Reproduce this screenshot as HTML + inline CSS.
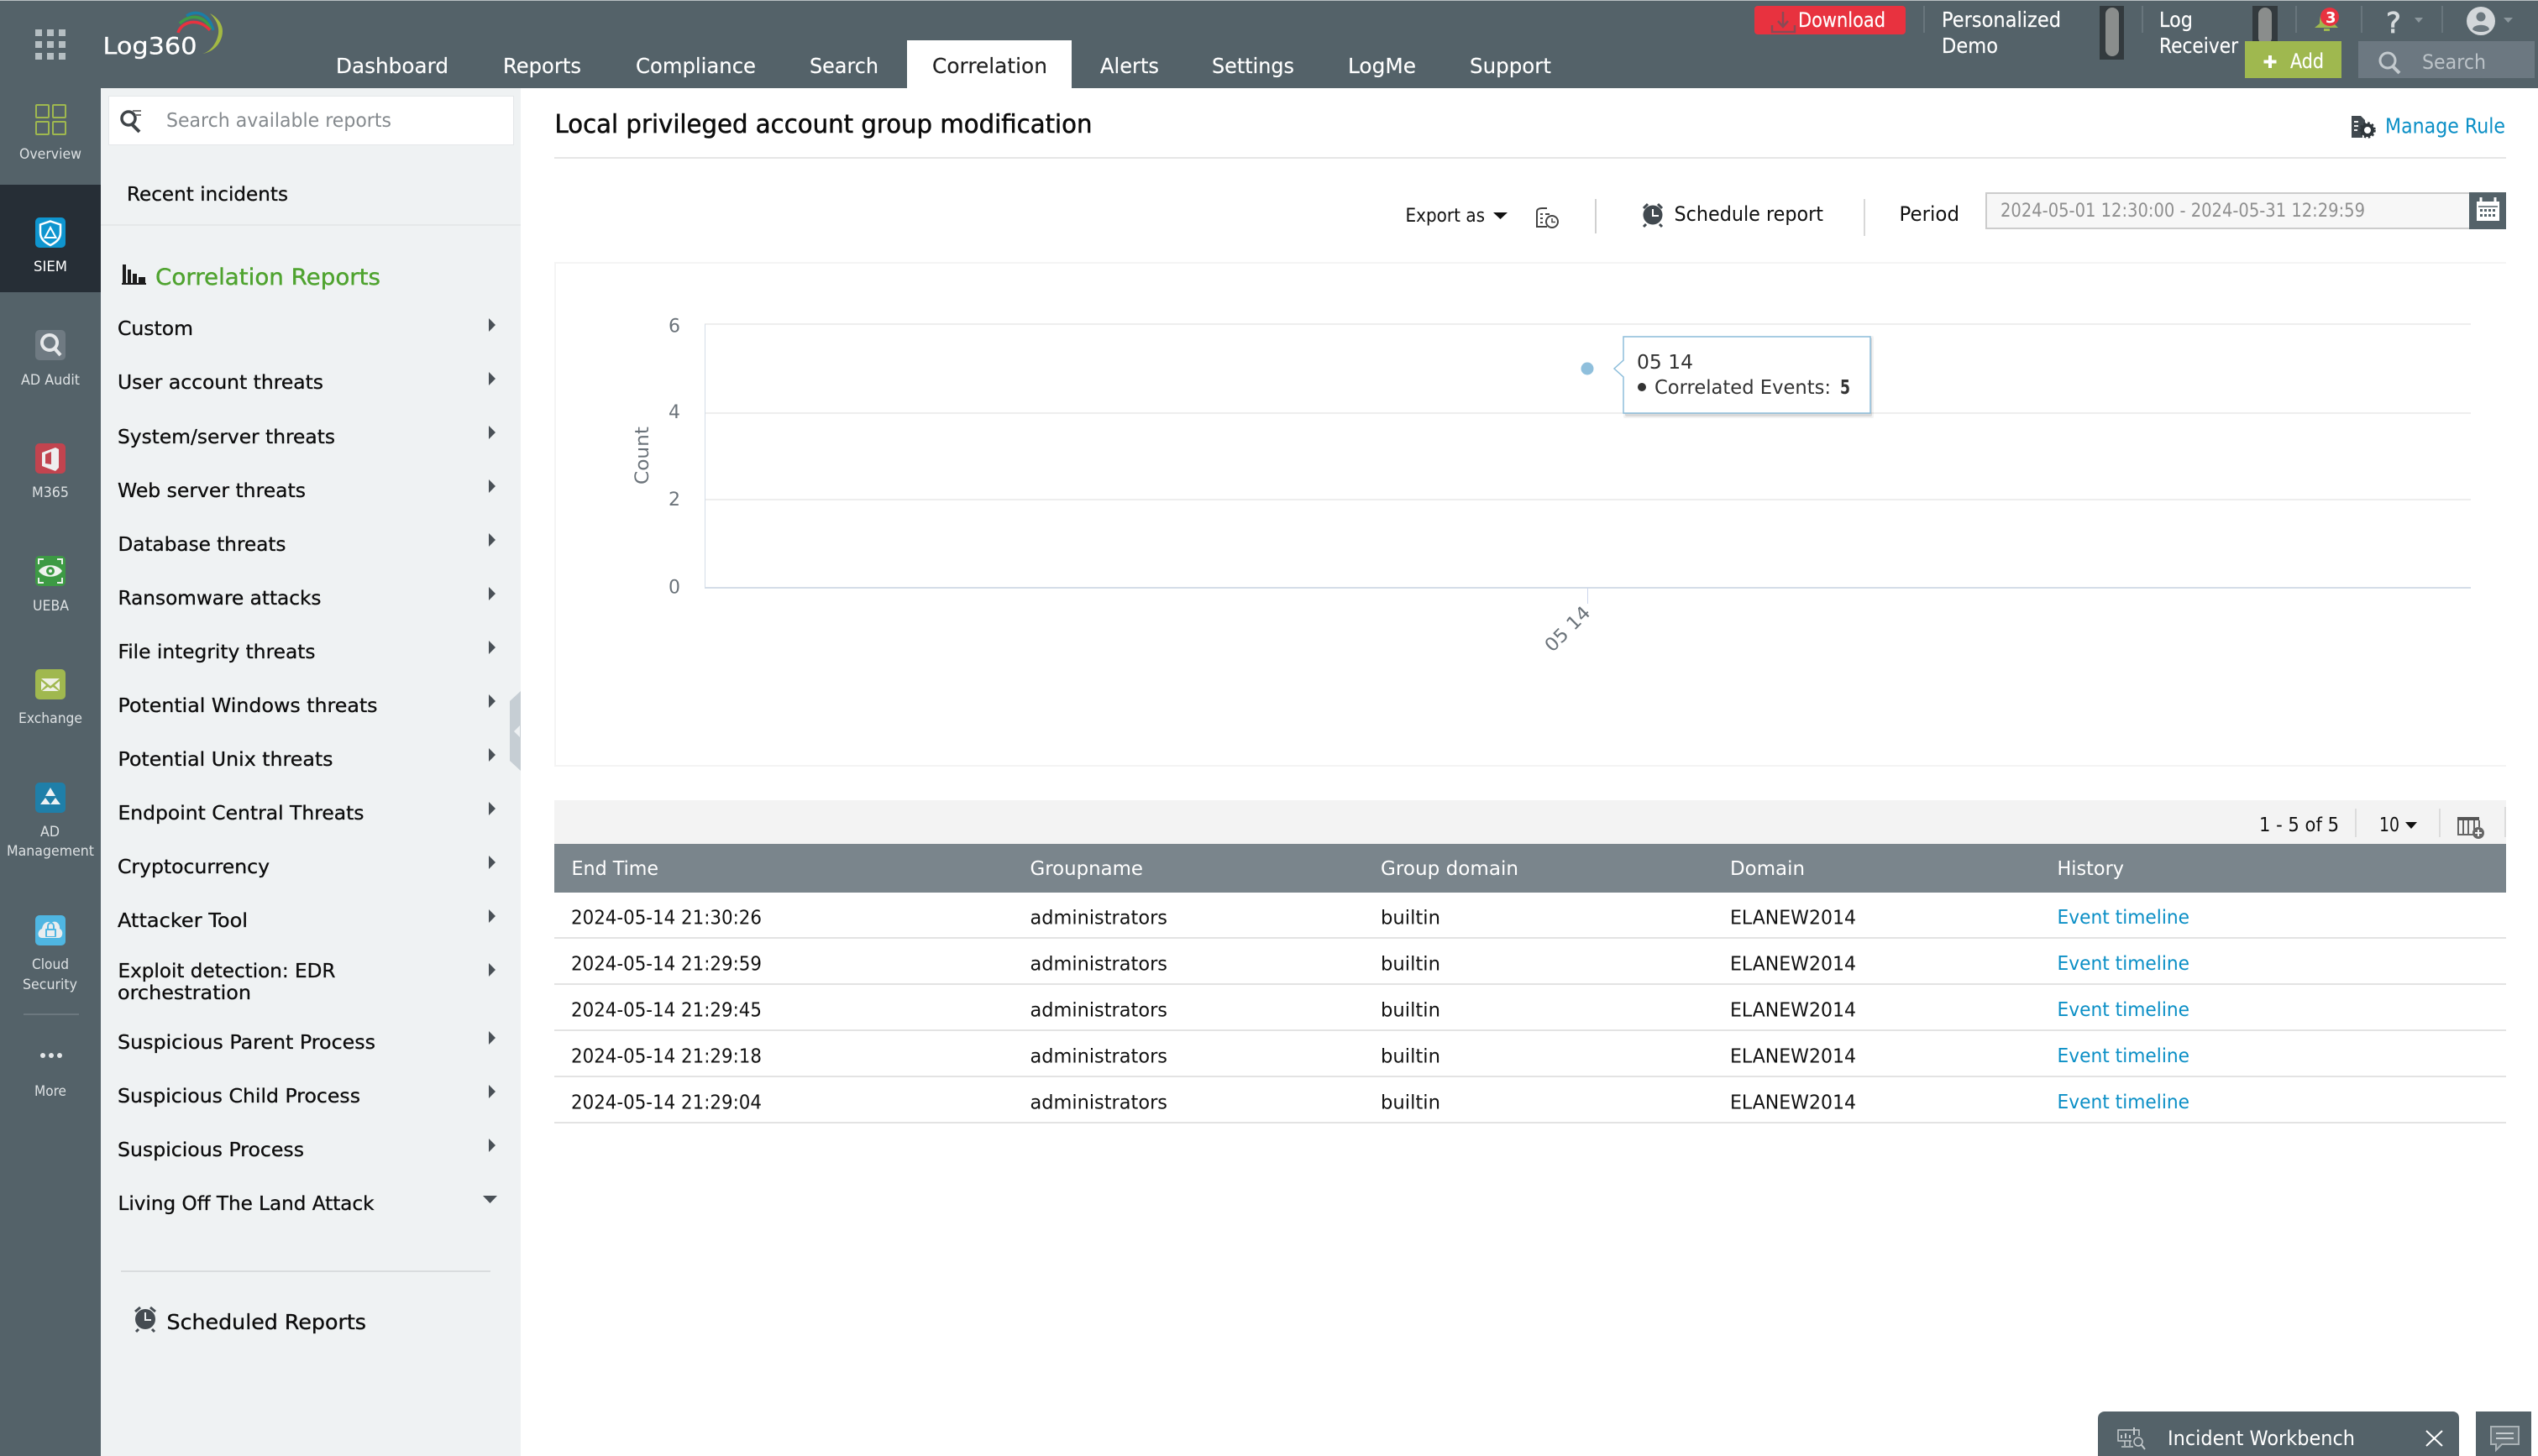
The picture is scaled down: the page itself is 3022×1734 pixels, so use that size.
<!DOCTYPE html>
<html lang="en"><head><meta charset="utf-8"><title>Log360</title>
<style>
html,body{margin:0;padding:0;background:#fff;width:3022px;height:1734px;overflow:hidden}
svg{display:block;position:absolute;left:0;top:0}
text{font-family:"DejaVu Sans","Liberation Sans",sans-serif;white-space:pre}
.m{font-size:23px;fill:#0c0c0c;stroke:#0c0c0c;stroke-width:.3px}
.n{font-size:25px;fill:#fff;stroke:#fff;stroke-width:.15px}
.r{font-size:17px;fill:#dde1e3}
.t{font-size:23px;fill:#111}
.h{font-size:23px;fill:#fff}
.l{font-size:23px;fill:#0b8fc6}
.a{font-size:22px;fill:#6b737a}
</style></head><body>
<svg xmlns="http://www.w3.org/2000/svg" width="3022" height="1734" viewBox="0 0 3022 1734">
<rect width="3022" height="1734" fill="#fff"/>
<!-- header and rail -->
<rect width="3022" height="105" fill="#546269"/>
<rect width="3022" height="1" fill="#b9bfc2"/>
<rect x="0" y="105" width="120" height="1629" fill="#546269"/>
<rect x="120" y="105" width="500" height="1629" fill="#eff2f3"/>
<!-- grid launcher -->
<g fill="#b5bec2"><rect x="42" y="35" width="8" height="8"/><rect x="56" y="35" width="8" height="8"/><rect x="70" y="35" width="8" height="8"/><rect x="42" y="49" width="8" height="8"/><rect x="56" y="49" width="8" height="8"/><rect x="70" y="49" width="8" height="8"/><rect x="42" y="63" width="8" height="8"/><rect x="56" y="63" width="8" height="8"/><rect x="70" y="63" width="8" height="8"/></g>
<!-- logo -->
<path d="M241 64C255 62 265 50 265 37C265 28 258 20 250 16C258 24 261 32 260 40C258 52 250 62 241 64Z" fill="#a3b943"/>
<path d="M222 19C232 12 248 14 254 36" fill="none" stroke="#1b7ea6" stroke-width="3.500"/>
<path d="M214 28C226 16 244 18 251 35" fill="none" stroke="#3f9a45" stroke-width="3.500"/>
<path d="M212 39C216 26 236 20 250 36" fill="none" stroke="#e8323f" stroke-width="3.500"/>
<text x="122.500" y="64" font-size="28" fill="#fff" stroke="#fff" stroke-width=".3" textLength="112" lengthAdjust="spacingAndGlyphs">Log360</text>
<!-- nav -->
<rect x="1080" y="48" width="196" height="58" fill="#fff"/>
<text class="n" x="400" y="87" textLength="134" lengthAdjust="spacingAndGlyphs">Dashboard</text>
<text class="n" x="599" y="87" textLength="93" lengthAdjust="spacingAndGlyphs">Reports</text>
<text class="n" x="757" y="87" textLength="143" lengthAdjust="spacingAndGlyphs">Compliance</text>
<text class="n" x="964" y="87" textLength="82" lengthAdjust="spacingAndGlyphs">Search</text>
<text class="n" x="1110" y="87" textLength="137" lengthAdjust="spacingAndGlyphs" style="fill:#222;stroke:#222">Correlation</text>
<text class="n" x="1310" y="87" textLength="70" lengthAdjust="spacingAndGlyphs">Alerts</text>
<text class="n" x="1443" y="87" textLength="98" lengthAdjust="spacingAndGlyphs">Settings</text>
<text class="n" x="1605" y="87" textLength="81" lengthAdjust="spacingAndGlyphs">LogMe</text>
<text class="n" x="1750" y="87" textLength="97" lengthAdjust="spacingAndGlyphs">Support</text>
<!-- header right -->
<rect x="2089" y="7" width="180" height="34" rx="4" fill="#e8323f"/>
<path d="M2123 14V30M2117 25L2123 32L2129 25" fill="none" stroke="#8a4a55" stroke-width="2.500"/><path d="M2110 30V38H2137V30" fill="none" stroke="#8a4a55" stroke-width="2.500"/>
<text class="n" x="2141" y="32" textLength="104" lengthAdjust="spacingAndGlyphs" style="font-size:24px">Download</text>
<g fill="#68757c"><rect x="2290" y="7" width="2" height="32"/><rect x="2550" y="7" width="2" height="32"/><rect x="2733" y="7" width="2" height="32"/><rect x="2811" y="7" width="2" height="32"/><rect x="2907" y="7" width="2" height="32"/></g>
<text class="n" x="2312" y="32" textLength="142" lengthAdjust="spacingAndGlyphs">Personalized</text>
<text class="n" x="2312" y="63" textLength="67" lengthAdjust="spacingAndGlyphs">Demo</text>
<rect x="2500" y="7" width="29" height="64" fill="#333a3e"/><rect x="2507" y="9" width="16" height="58" rx="8" fill="#8a8d8c"/>
<text class="n" x="2571" y="32" textLength="40" lengthAdjust="spacingAndGlyphs">Log</text>
<text class="n" x="2571" y="63" textLength="94" lengthAdjust="spacingAndGlyphs">Receiver</text>
<rect x="2682" y="7" width="30" height="44" fill="#333a3e"/><rect x="2689" y="9" width="16" height="44" rx="8" fill="#8a8d8c"/>
<rect x="2673" y="49" width="115" height="44" fill="#9fb84f"/>
<path d="M2703 66V81M2695.500 73.500H2710.500" stroke="#fff" stroke-width="4"/>
<text class="n" x="2727" y="81" textLength="40" lengthAdjust="spacingAndGlyphs" style="font-size:24px">Add</text>
<rect x="2808" y="49" width="210" height="44" fill="#6c7881"/>
<circle cx="2843" cy="72" r="9" fill="none" stroke="#c3cace" stroke-width="3"/><path d="M2849 79L2857 87" stroke="#c3cace" stroke-width="4"/>
<text class="n" x="2884" y="82" textLength="76" lengthAdjust="spacingAndGlyphs" style="font-size:24px;fill:#bcc3c8;stroke:none">Search</text>
<!-- bell -->
<path d="M2771 11C2763 12 2762 22 2762 28L2756 33H2784L2779 28C2779 22 2778 12 2771 11Z" fill="#9fb84f"/><rect x="2767" y="34" width="7" height="3" fill="#9fb84f"/>
<circle cx="2774" cy="20" r="11" fill="#e8323f"/><text x="2769" y="27" font-size="18" font-weight="700" fill="#fff">3</text>
<text x="2841" y="39" font-size="34" fill="#d5dadc" textLength="18" lengthAdjust="spacingAndGlyphs" stroke="#d5dadc" stroke-width=".8">?</text>
<path d="M2875 21H2885L2880 27Z" fill="#8d989e"/>
<circle cx="2954" cy="25" r="17" fill="#d3d7da"/><circle cx="2954" cy="20" r="5.500" fill="#6b777e"/><path d="M2944 35C2945 28 2963 28 2964 35C2960 39 2948 39 2944 35Z" fill="#6b777e"/>
<path d="M2981 21H2992L2986.500 27Z" fill="#8d989e"/>
<!-- rail -->
<rect x="0" y="220" width="120" height="128" fill="#262e36"/>
<g fill="none" stroke="#9fb84f" stroke-width="2"><rect x="43" y="125" width="15" height="15" rx="1"/><rect x="63" y="125" width="15" height="15" rx="1"/><rect x="43" y="145" width="15" height="15" rx="1"/><rect x="63" y="145" width="15" height="15" rx="1"/></g>
<text class="r" x="23" y="189" textLength="74" lengthAdjust="spacingAndGlyphs">Overview</text>
<rect x="42" y="259" width="36" height="36" rx="5" fill="#0f95cf"/>
<path d="M60 263.500L72 267.500V277C72 285 66 289 60 292C54 289 48 285 48 277V267.500Z" fill="none" stroke="#fff" stroke-width="2.500"/><path d="M60 271L66.500 283H53.500Z" fill="none" stroke="#fff" stroke-width="2"/>
<text class="r" x="40" y="323" textLength="40" lengthAdjust="spacingAndGlyphs" style="fill:#fff">SIEM</text>
<rect x="42" y="393" width="36" height="36" rx="5" fill="#6f7a82"/>
<circle cx="59" cy="408" r="9" fill="none" stroke="#e6e8ea" stroke-width="4"/><path d="M65 415L72 423" stroke="#e6e8ea" stroke-width="4"/>
<text class="r" x="25" y="458" textLength="70" lengthAdjust="spacingAndGlyphs">AD Audit</text>
<rect x="42" y="528" width="36" height="36" rx="5" fill="#c2444f"/>
<path d="M50 539L66 533L70 535V557L66 561L50 555ZM54 541V552L61 553V538Z" fill="#eee" fill-rule="evenodd"/>
<text class="r" x="38" y="592" textLength="44" lengthAdjust="spacingAndGlyphs">M365</text>
<rect x="42" y="662" width="36" height="36" rx="5" fill="#3d9a44"/>
<path d="M46 680C52 671 68 671 74 680C68 689 52 689 46 680Z" fill="#f0f3ef"/><circle cx="60" cy="680" r="5" fill="#3d9a44"/><circle cx="60" cy="680" r="2" fill="#f0f3ef"/>
<path d="M46 672V666H52M68 666H74V672M46 688V694H52M68 694H74V688" fill="none" stroke="#eaf0ea" stroke-width="2"/>
<text class="r" x="39" y="727" textLength="43" lengthAdjust="spacingAndGlyphs">UEBA</text>
<rect x="42" y="797" width="36" height="36" rx="5" fill="#a0b84f"/>
<path d="M49 808H71L60 817ZM49 811L55 816L49 822ZM71 811L65 816L71 822ZM50 823L57 818L60 820L63 818L70 823Z" fill="#eef0e4"/>
<text class="r" x="22" y="861" textLength="76" lengthAdjust="spacingAndGlyphs">Exchange</text>
<rect x="42" y="932" width="36" height="36" rx="5" fill="#1f7fa9"/>
<path d="M60 938L66 948H54ZM54 950L60 958H48ZM66 950L72 958H60Z" fill="#eef2f4"/>
<text class="r" x="48" y="996" textLength="23" lengthAdjust="spacingAndGlyphs">AD</text>
<text class="r" x="8" y="1019" textLength="104" lengthAdjust="spacingAndGlyphs">Management</text>
<rect x="42" y="1090" width="36" height="36" rx="5" fill="#4fb6e2"/>
<path d="M50 1117C44 1117 44 1108 50 1106C51 1099 57 1096 61 1099C66 1095 72 1100 71 1106C76 1108 75 1117 70 1117Z" fill="#e9edef"/>
<rect x="54" y="1106" width="13" height="10" rx="1" fill="#4fb6e2"/><path d="M57 1106V1103C57 1098 64 1098 64 1103V1106" fill="none" stroke="#4fb6e2" stroke-width="2"/><rect x="56" y="1108" width="9" height="7" fill="#e9edef"/>
<text class="r" x="38" y="1154" textLength="44" lengthAdjust="spacingAndGlyphs">Cloud</text>
<text class="r" x="27" y="1178" textLength="65" lengthAdjust="spacingAndGlyphs">Security</text>
<rect x="28" y="1207" width="66" height="2" fill="#6c787f"/>
<g fill="#e3e6e8"><circle cx="51" cy="1257" r="3"/><circle cx="61" cy="1257" r="3"/><circle cx="71" cy="1257" r="3"/></g>
<text class="r" x="41" y="1305" textLength="38" lengthAdjust="spacingAndGlyphs">More</text>
<!-- panel -->
<rect x="129.500" y="114.500" width="482" height="58" fill="#fff" stroke="#e4e7e9"/>
<circle cx="153" cy="141" r="8" fill="none" stroke="#3f4448" stroke-width="3.500"/><path d="M157 148L166 157" stroke="#3f4448" stroke-width="4"/><path d="M158 132H168M161 137H168" stroke="#777" stroke-width="2"/>
<text x="198" y="151" font-size="23" fill="#858a8e" textLength="268" lengthAdjust="spacingAndGlyphs">Search available reports</text>
<text class="m" x="151" y="239" textLength="192" lengthAdjust="spacingAndGlyphs">Recent incidents</text>
<rect x="120" y="267" width="500" height="2" fill="#e5e8e9"/>
<path d="M146 315H150V337H146ZM152 321H156V337H152ZM158 326H163V337H158ZM165 330H173V337H165ZM145 337H174V339H145Z" fill="#1c1c1c"/>
<text x="185" y="339" font-size="27" fill="#4fa32f" stroke="#4fa32f" stroke-width=".4" textLength="268" lengthAdjust="spacingAndGlyphs">Correlation Reports</text>
<text class="m" x="140" y="399" textLength="90" lengthAdjust="spacingAndGlyphs">Custom</text>
<text class="m" x="140" y="463" textLength="245" lengthAdjust="spacingAndGlyphs">User account threats</text>
<text class="m" x="140" y="528" textLength="259" lengthAdjust="spacingAndGlyphs">System/server threats</text>
<text class="m" x="140" y="592" textLength="224" lengthAdjust="spacingAndGlyphs">Web server threats</text>
<text class="m" x="140.500" y="656" textLength="200" lengthAdjust="spacingAndGlyphs">Database threats</text>
<text class="m" x="140.500" y="720" textLength="242" lengthAdjust="spacingAndGlyphs">Ransomware attacks</text>
<text class="m" x="140.500" y="784" textLength="235" lengthAdjust="spacingAndGlyphs">File integrity threats</text>
<text class="m" x="140.500" y="848" textLength="309" lengthAdjust="spacingAndGlyphs">Potential Windows threats</text>
<text class="m" x="140.500" y="912" textLength="256" lengthAdjust="spacingAndGlyphs">Potential Unix threats</text>
<text class="m" x="140.500" y="976" textLength="293" lengthAdjust="spacingAndGlyphs">Endpoint Central Threats</text>
<text class="m" x="140" y="1040" textLength="181" lengthAdjust="spacingAndGlyphs">Cryptocurrency</text>
<text class="m" x="140" y="1104" textLength="155" lengthAdjust="spacingAndGlyphs">Attacker Tool</text>
<text class="m" x="140.500" y="1164" textLength="259" lengthAdjust="spacingAndGlyphs">Exploit detection: EDR</text>
<text class="m" x="140" y="1190" textLength="159" lengthAdjust="spacingAndGlyphs">orchestration</text>
<text class="m" x="140" y="1249" textLength="307" lengthAdjust="spacingAndGlyphs">Suspicious Parent Process</text>
<text class="m" x="140" y="1313" textLength="289" lengthAdjust="spacingAndGlyphs">Suspicious Child Process</text>
<text class="m" x="140" y="1377" textLength="222" lengthAdjust="spacingAndGlyphs">Suspicious Process</text>
<text class="m" x="140.500" y="1441" textLength="305" lengthAdjust="spacingAndGlyphs">Living Off The Land Attack</text>
<g fill="#4a5157">
<path d="M582 379L590 387L582 395Z"/><path d="M582 443L590 451L582 459Z"/><path d="M582 507L590 515L582 523Z"/><path d="M582 571L590 579L582 587Z"/><path d="M582 635L590 643L582 651Z"/><path d="M582 699L590 707L582 715Z"/><path d="M582 763L590 771L582 779Z"/><path d="M582 827L590 835L582 843Z"/><path d="M582 891L590 899L582 907Z"/><path d="M582 955L590 963L582 971Z"/><path d="M582 1019L590 1027L582 1035Z"/><path d="M582 1083L590 1091L582 1099Z"/><path d="M582 1147L590 1155L582 1163Z"/><path d="M582 1228L590 1236L582 1244Z"/><path d="M582 1292L590 1300L582 1308Z"/><path d="M582 1356L590 1364L582 1372Z"/><path d="M575 1424H592L583.500 1433Z"/>
</g>
<path d="M620 823V918L607 906V835Z" fill="#c6ced4"/><path d="M619 864L612 871L619 878Z" fill="#eef1f3"/>
<rect x="144" y="1513" width="440" height="2" fill="#d9dcde"/>
<circle cx="173" cy="1571" r="12" fill="#454c52"/><path d="M161 1562L167 1557M185 1562L179 1557M165 1583L162 1586M181 1583L184 1586" stroke="#454c52" stroke-width="3"/><path d="M173 1563V1572H180" fill="none" stroke="#eef1f3" stroke-width="2"/>
<text x="198.500" y="1583" font-size="25" fill="#0c0c0c" stroke="#0c0c0c" stroke-width=".35" textLength="237.500" lengthAdjust="spacingAndGlyphs">Scheduled Reports</text>
<!-- main title -->
<text x="660.500" y="158" font-size="30" fill="#0c0c0c" stroke="#0c0c0c" stroke-width=".55" textLength="640" lengthAdjust="spacingAndGlyphs">Local privileged account group modification</text>
<path d="M2800 138H2811L2816 143V150H2813V164H2800Z" fill="#41494f"/><path d="M2803 145H2808M2803 150H2808M2803 155H2807" stroke="#eee" stroke-width="2"/>
<circle cx="2819" cy="155" r="6" fill="#fff" stroke="#2f363b" stroke-width="4"/><circle cx="2819" cy="155" r="8.500" fill="none" stroke="#2f363b" stroke-width="2.500" stroke-dasharray="2.500 2.500"/>
<text x="2840" y="158.500" font-size="25" fill="#0b8fc6" textLength="143" lengthAdjust="spacingAndGlyphs">Manage Rule</text>
<rect x="660" y="187" width="2324" height="2" fill="#e6e6e6"/>
<!-- toolbar -->
<text x="1673.500" y="264" font-size="22" fill="#111" textLength="94.500" lengthAdjust="spacingAndGlyphs">Export as</text>
<path d="M1778 253H1795L1786.500 261Z" fill="#111"/>
<path d="M1842 248H1836C1833 248 1830 249 1830 252V270H1842" fill="none" stroke="#444" stroke-width="2"/><path d="M1834 255H1837M1834 260H1837M1834 265H1837M1840 255H1845" stroke="#444" stroke-width="2"/>
<circle cx="1848" cy="264" r="7" fill="#fff" stroke="#444" stroke-width="2"/><path d="M1848 260V264.500H1852" fill="none" stroke="#444" stroke-width="1.500"/>
<rect x="1899" y="237" width="2" height="41" fill="#d0d0d0"/>
<circle cx="1968" cy="256" r="11.500" fill="#41494f"/><path d="M1957 248L1962 243M1979 248L1974 243M1960 267L1957 270M1976 267L1979 270" stroke="#41494f" stroke-width="3"/><path d="M1968 249V257H1975" fill="none" stroke="#fff" stroke-width="2"/>
<text x="1993.500" y="263" font-size="24" fill="#111" textLength="177.500" lengthAdjust="spacingAndGlyphs">Schedule report</text>
<rect x="2219" y="237" width="2" height="44" fill="#d8d8d8"/>
<text x="2261.500" y="263" font-size="24" fill="#111" textLength="71.500" lengthAdjust="spacingAndGlyphs">Period</text>
<rect x="2365" y="230" width="576" height="42" fill="#f7f7f7" stroke="#ccc" stroke-width="2"/>
<text x="2382" y="258" font-size="22" fill="#8f8f8f" textLength="434" lengthAdjust="spacingAndGlyphs">2024-05-01 12:30:00 - 2024-05-31 12:29:59</text>
<rect x="2940" y="229" width="44" height="44" fill="#546269"/>
<path d="M2949 240H2976V263H2949Z" fill="#fff"/><path d="M2954 235V243M2971 235V243" stroke="#fff" stroke-width="3"/><path d="M2951 246H2974" stroke="#546269" stroke-width="1.500"/>
<g fill="#546269"><rect x="2953" y="249" width="3" height="3"/><rect x="2958" y="249" width="3" height="3"/><rect x="2963" y="249" width="3" height="3"/><rect x="2968" y="249" width="3" height="3"/><rect x="2953" y="255" width="3" height="3"/><rect x="2958" y="255" width="3" height="3"/><rect x="2963" y="255" width="3" height="3"/><rect x="2968" y="255" width="3" height="3"/></g>
<!-- chart -->
<path d="M2984 313H661V912H2984" fill="none" stroke="#f4f4f4" stroke-width="2"/>
<g fill="#eeeeee"><rect x="839" y="385" width="2103" height="2"/><rect x="839" y="491" width="2103" height="2"/><rect x="839" y="594" width="2103" height="2"/></g>
<rect x="839" y="386" width="1" height="314" fill="#d4dde8"/>
<rect x="839" y="699" width="2103" height="2" fill="#d4dde8"/>
<rect x="1890" y="700" width="1" height="19" fill="#ccd6eb"/>
<text class="a" x="796" y="395.500">6</text><text class="a" x="796" y="498">4</text><text class="a" x="796" y="602">2</text><text class="a" x="796" y="706.500">0</text>
<text class="a" transform="translate(772 577) rotate(-90)" textLength="69" lengthAdjust="spacingAndGlyphs">Count</text>
<circle cx="1890" cy="439" r="7.500" fill="#8fbfdc"/>
<text class="a" transform="translate(1895 731) rotate(-45)" text-anchor="end" textLength="66" lengthAdjust="spacingAndGlyphs" x="0" y="0">05 14</text>
<rect x="1933" y="400" width="298" height="98" fill="#000" opacity=".05" rx="2"/>
<rect x="1935" y="402" width="294" height="94" fill="#000" opacity=".10" rx="2"/>
<path d="M1933 401H2227V492H1933V449L1922 439L1933 429Z" fill="#fff" stroke="#8dbedb" stroke-width="1.500"/>
<text x="1949" y="439" font-size="23" fill="#333" textLength="67" lengthAdjust="spacingAndGlyphs">05 14</text>
<circle cx="1955" cy="461" r="5" fill="#333"/>
<text x="1970" y="469" font-size="23" fill="#333" textLength="210" lengthAdjust="spacingAndGlyphs">Correlated Events:</text>
<text x="2191" y="469" font-size="23" font-weight="700" fill="#333" textLength="12" lengthAdjust="spacingAndGlyphs">5</text>
<!-- table -->
<rect x="660" y="953" width="2324" height="52" fill="#f3f3f3"/>
<text x="2690" y="990" font-size="23" fill="#111" textLength="95" lengthAdjust="spacingAndGlyphs">1 - 5 of 5</text>
<rect x="2804" y="963" width="2" height="34" fill="#dcdcdc"/>
<text x="2833" y="990" font-size="23" fill="#111" textLength="24" lengthAdjust="spacingAndGlyphs">10</text>
<path d="M2864 979H2878L2871 987Z" fill="#111"/>
<rect x="2904" y="963" width="2" height="34" fill="#dcdcdc"/>
<rect x="2982" y="961" width="2" height="36" fill="#dcdcdc"/>
<path d="M2926 973H2952V977H2926Z" fill="#555"/><path d="M2927 977V994H2946M2933 977V994M2939 977V994M2946 977V988M2952 977V985" fill="none" stroke="#666" stroke-width="2"/>
<circle cx="2951" cy="992" r="7" fill="#666"/><path d="M2951 988V996M2947 992H2955" stroke="#f3f3f3" stroke-width="2"/>
<rect x="660" y="1005" width="2324" height="58" fill="#7a858c"/>
<text class="h" x="680.500" y="1042" textLength="103.500" lengthAdjust="spacingAndGlyphs">End Time</text>
<text class="h" x="1226.500" y="1042" textLength="134.500" lengthAdjust="spacingAndGlyphs">Groupname</text>
<text class="h" x="1644" y="1042" textLength="164" lengthAdjust="spacingAndGlyphs">Group domain</text>
<text class="h" x="2060" y="1042" textLength="89" lengthAdjust="spacingAndGlyphs">Domain</text>
<text class="h" x="2449.500" y="1042" textLength="79.500" lengthAdjust="spacingAndGlyphs">History</text>
<g fill="#e3e3e3"><rect x="660" y="1116" width="2324" height="2"/><rect x="660" y="1171" width="2324" height="2"/><rect x="660" y="1226" width="2324" height="2"/><rect x="660" y="1281" width="2324" height="2"/><rect x="660" y="1336" width="2324" height="2"/></g>
<text class="t" x="680" y="1100.500" textLength="227" lengthAdjust="spacingAndGlyphs">2024-05-14 21:30:26</text>
<text class="t" x="1226.500" y="1100.500" textLength="163.500" lengthAdjust="spacingAndGlyphs">administrators</text>
<text class="t" x="1644" y="1100.500" textLength="71" lengthAdjust="spacingAndGlyphs">builtin</text>
<text class="t" x="2060" y="1100.500" textLength="150" lengthAdjust="spacingAndGlyphs">ELANEW2014</text>
<text class="l" x="2449.500" y="1100" textLength="157.500" lengthAdjust="spacingAndGlyphs">Event timeline</text>
<text class="t" x="680" y="1155.500" textLength="227" lengthAdjust="spacingAndGlyphs">2024-05-14 21:29:59</text>
<text class="t" x="1226.500" y="1155.500" textLength="163.500" lengthAdjust="spacingAndGlyphs">administrators</text>
<text class="t" x="1644" y="1155.500" textLength="71" lengthAdjust="spacingAndGlyphs">builtin</text>
<text class="t" x="2060" y="1155.500" textLength="150" lengthAdjust="spacingAndGlyphs">ELANEW2014</text>
<text class="l" x="2449.500" y="1155" textLength="157.500" lengthAdjust="spacingAndGlyphs">Event timeline</text>
<text class="t" x="680" y="1210.500" textLength="227" lengthAdjust="spacingAndGlyphs">2024-05-14 21:29:45</text>
<text class="t" x="1226.500" y="1210.500" textLength="163.500" lengthAdjust="spacingAndGlyphs">administrators</text>
<text class="t" x="1644" y="1210.500" textLength="71" lengthAdjust="spacingAndGlyphs">builtin</text>
<text class="t" x="2060" y="1210.500" textLength="150" lengthAdjust="spacingAndGlyphs">ELANEW2014</text>
<text class="l" x="2449.500" y="1210" textLength="157.500" lengthAdjust="spacingAndGlyphs">Event timeline</text>
<text class="t" x="680" y="1265.500" textLength="227" lengthAdjust="spacingAndGlyphs">2024-05-14 21:29:18</text>
<text class="t" x="1226.500" y="1265.500" textLength="163.500" lengthAdjust="spacingAndGlyphs">administrators</text>
<text class="t" x="1644" y="1265.500" textLength="71" lengthAdjust="spacingAndGlyphs">builtin</text>
<text class="t" x="2060" y="1265.500" textLength="150" lengthAdjust="spacingAndGlyphs">ELANEW2014</text>
<text class="l" x="2449.500" y="1265" textLength="157.500" lengthAdjust="spacingAndGlyphs">Event timeline</text>
<text class="t" x="680" y="1320.500" textLength="227" lengthAdjust="spacingAndGlyphs">2024-05-14 21:29:04</text>
<text class="t" x="1226.500" y="1320.500" textLength="163.500" lengthAdjust="spacingAndGlyphs">administrators</text>
<text class="t" x="1644" y="1320.500" textLength="71" lengthAdjust="spacingAndGlyphs">builtin</text>
<text class="t" x="2060" y="1320.500" textLength="150" lengthAdjust="spacingAndGlyphs">ELANEW2014</text>
<text class="l" x="2449.500" y="1320" textLength="157.500" lengthAdjust="spacingAndGlyphs">Event timeline</text>
<!-- bottom -->
<path d="M2498 1734V1689C2498 1684 2502 1681 2506 1681H2920C2925 1681 2928 1684 2928 1689V1734Z" fill="#546269"/>
<path d="M2538 1716H2522V1703H2547V1710M2530 1716V1722M2536 1716V1722M2526 1723H2540" fill="none" stroke="#c5cbce" stroke-width="1.500"/>
<path d="M2526 1713V1709M2531 1713V1707M2536 1713V1709M2541 1709V1700" stroke="#c5cbce" stroke-width="2"/>
<circle cx="2546" cy="1717" r="5" fill="#546269" stroke="#c5cbce" stroke-width="1.500"/><path d="M2550 1721L2554 1726" stroke="#c5cbce" stroke-width="2"/>
<text x="2581" y="1721" font-size="24" fill="#fff" textLength="223" lengthAdjust="spacingAndGlyphs">Incident Workbench</text>
<path d="M2889 1704L2908 1722M2908 1704L2889 1722" stroke="#fff" stroke-width="2"/>
<rect x="2948" y="1681" width="66" height="53" fill="#546269"/>
<path d="M2966 1699H2999V1720H2979L2972 1727V1720H2966Z" fill="#6a767c" stroke="#a9b1b5" stroke-width="2"/>
<path d="M2972 1707H2993M2972 1713H2993" stroke="#c5cbce" stroke-width="2"/>
</svg>
</body></html>
